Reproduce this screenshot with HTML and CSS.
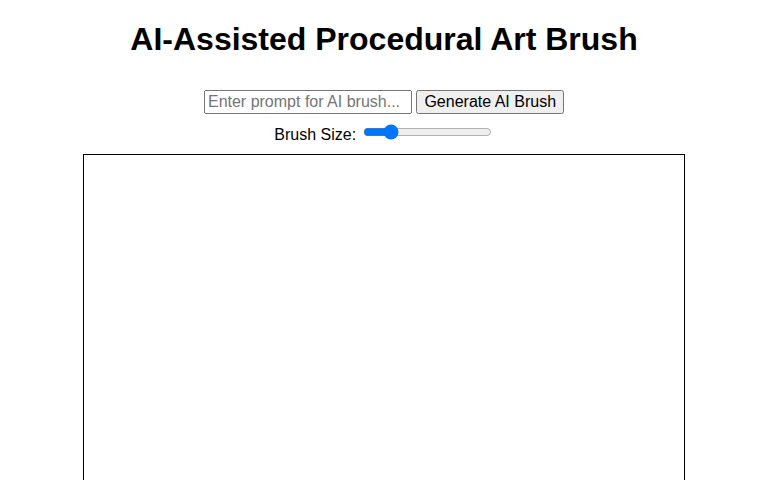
FILE: index.html
```html
<html>
<head>
  <title>AI-Assisted Procedural Art Brush</title>
  <link rel="stylesheet" href="styles.css">
</head>
<body>
  <h1>AI-Assisted Procedural Art Brush</h1>

  <div class="controls">
    <input type="text" id="prompt" placeholder="Enter prompt for AI brush...">
    <button id="generate">Generate AI Brush</button>
  </div>
  <div class="controls">
    <label for="size">Brush Size:</label>
    <input type="range" id="size" min="1" max="50" value="10">
  </div>

  <canvas id="canvas" width="600" height="400"></canvas>
</body>
</html>
```

FILE: styles.css
```css
body {
  font-family: "Liberation Sans", Arial, sans-serif;
  text-align: center;
}

h1 {
  margin: 13px 0 32px;
}

.controls {
  margin: 8px 0;
}

.controls input[type="text"],
.controls button {
  font-family: "Liberation Sans", Arial, sans-serif;
  font-size: 16px;
}

.controls input[type="text"] {
  width: 208px;
}

.controls label {
  font-size: 16px;
}

canvas {
  display: block;
  margin: 10px auto 0;
  border: 1px solid black;
  background: white;
}
```
